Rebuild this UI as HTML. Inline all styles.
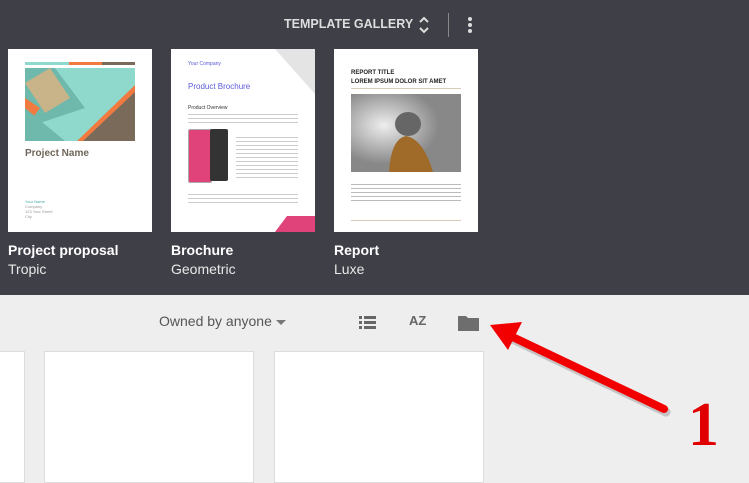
<!DOCTYPE html>
<html><head><style>
body{margin:0;width:749px;height:473px;overflow:hidden;position:relative;font-family:"Liberation Sans",Arial,sans-serif;background:#eeeeee}
.top{position:absolute;left:0;top:0;width:749px;height:295px;background:#3f3f47}
.card{position:absolute;top:49px;width:144px;height:183px;background:#fff;overflow:hidden}
.t{position:absolute;color:#fff;font-size:14px;font-weight:bold}
.s{position:absolute;color:#e8e8e8;font-size:14px}
.w{position:absolute;background:#fff;border:1px solid #ddd;top:351px;height:130px}
</style></head><body>
<div class="top"></div>
<div style="position:absolute;left:284px;top:17px;color:#ddd;font-size:12.5px;font-weight:bold">TEMPLATE GALLERY</div>
<svg style="position:absolute;left:417px;top:14px" width="14" height="22"><path d="M3 8l4-4 4 4M3 14l4 4 4-4" stroke="#ddd" stroke-width="2" fill="none"/></svg>
<div style="position:absolute;left:448px;top:13px;width:1px;height:24px;background:#888"></div>
<div style="position:absolute;left:468px;top:17px;width:4px">
<div style="width:4px;height:4px;border-radius:2px;background:#ddd;margin-bottom:2px"></div><div style="width:4px;height:4px;border-radius:2px;background:#ddd;margin-bottom:2px"></div><div style="width:4px;height:4px;border-radius:2px;background:#ddd"></div></div>

<div class="card" style="left:8px">
 <div style="position:absolute;left:17px;top:13px;width:110px;height:3px;background:linear-gradient(90deg,#8fd9cc 40%,#f07a40 40%,#f07a40 70%,#7a6a5a 70%)"></div>
 <svg style="position:absolute;left:17px;top:19px" width="110" height="73"><rect width="110" height="73" fill="#8fd9cc"/><polygon points="0,0 30,0 60,40 0,60" fill="#6fb8ac"/><polygon points="0,15 25,0 45,30 20,45" fill="#c9b48a"/><polygon points="0,30 15,40 0,60" fill="#f07a40"/><polygon points="110,20 55,73 110,73" fill="#7a6a5a"/><polygon points="110,17 52,73 58,73 110,24" fill="#f07a40"/><polygon points="0,40 40,73 0,73" fill="#6fb8ac"/></svg>
 <div style="position:absolute;left:17px;top:99px;font-size:10px;font-weight:bold;color:#6e6558">Project Name</div>
 <div style="position:absolute;left:17px;top:150px;font-size:4px;color:#4aa;line-height:5px">Your Name<br><span style="color:#999">Company<br>123 Your Street<br>City</span></div>
</div>
<div class="card" style="left:171px">
 <div style="position:absolute;left:17px;top:12px;font-size:5px;color:#5a5ad8">Your Company</div>
 <div style="position:absolute;left:17px;top:33px;font-size:8px;color:#5a5ad8">Product Brochure</div>
 <div style="position:absolute;left:17px;top:56px;font-size:5px;color:#333">Product Overview</div>
 <div style="position:absolute;left:17px;top:65px;width:110px;height:12px;background:repeating-linear-gradient(#ccc 0 1px,transparent 1px 4px)"></div>
 <div style="position:absolute;left:17px;top:80px;width:22px;height:52px;background:#e0427a;border:1px solid #aaa;border-radius:2px"></div>
 <div style="position:absolute;left:39px;top:80px;width:18px;height:52px;background:#333;border-radius:2px"></div>
 <div style="position:absolute;left:65px;top:88px;width:62px;height:44px;background:repeating-linear-gradient(#ccc 0 1px,transparent 1px 4px)"></div>
 <div style="position:absolute;left:17px;top:145px;width:110px;height:12px;background:repeating-linear-gradient(#ccc 0 1px,transparent 1px 4px)"></div>
 <div style="position:absolute;right:0;bottom:0;width:40px;height:16px;background:#e0427a;clip-path:polygon(30% 0,100% 0,100% 100%,0 100%)"></div>
 <div style="position:absolute;right:0;top:0;width:40px;height:45px;background:#e4e4e4;clip-path:polygon(0 0,100% 0,100% 100%)"></div>
</div>
<div class="card" style="left:334px">
 <div style="position:absolute;left:17px;top:20px;font-size:6px;font-weight:bold;color:#222;line-height:9px">REPORT TITLE<br>LOREM IPSUM DOLOR SIT AMET</div>
 <div style="position:absolute;left:17px;top:39px;width:110px;height:1px;background:#d8cbb8"></div>
 <svg style="position:absolute;left:17px;top:45px" width="110" height="78"><defs><radialGradient id="g" cx="0.3" cy="0.4"><stop offset="0" stop-color="#eee"/><stop offset="1" stop-color="#888"/></radialGradient></defs><rect width="110" height="78" fill="url(#g)"/><path d="M38 78 Q40 45 55 42 Q72 45 82 78Z" fill="#a06a28"/><ellipse cx="57" cy="30" rx="13" ry="12" fill="#666"/></svg>
 <div style="position:absolute;left:17px;top:135px;width:110px;height:20px;background:repeating-linear-gradient(#bbb 0 1px,transparent 1px 4px)"></div>
 <div style="position:absolute;left:17px;top:171px;width:110px;height:1px;background:#d8cbb8"></div>
</div>
<div class="t" style="left:8px;top:242px">Project proposal</div><div class="s" style="left:8px;top:261px">Tropic</div>
<div class="t" style="left:171px;top:242px">Brochure</div><div class="s" style="left:171px;top:261px">Geometric</div>
<div class="t" style="left:334px;top:242px">Report</div><div class="s" style="left:334px;top:261px">Luxe</div>

<div style="position:absolute;left:159px;top:313px;font-size:14px;color:#555">Owned by anyone</div>
<div style="position:absolute;left:276px;top:320px;border:5px solid transparent;border-top:5px solid #777;border-bottom:0"></div>
<svg style="position:absolute;left:358px;top:314px" width="20" height="16"><g fill="#666"><rect x="1" y="2" width="3" height="3"/><rect x="6" y="2" width="12" height="3"/><rect x="1" y="7" width="3" height="3"/><rect x="6" y="7" width="12" height="3"/><rect x="1" y="12" width="3" height="3"/><rect x="6" y="12" width="12" height="3"/></g></svg>
<div style="position:absolute;left:409px;top:313px;font-size:13px;color:#666;font-weight:bold">AZ</div>
<svg style="position:absolute;left:457px;top:314px" width="24" height="18"><path d="M1 2h8l2 2h11v13H1z" fill="#6e6e6e"/></svg>
<div class="w" style="left:-1px;width:24px"></div>
<div class="w" style="left:44px;width:208px"></div>
<div class="w" style="left:274px;width:208px"></div>
<svg style="position:absolute;left:480px;top:310px" width="200" height="110"><path d="M22 22 L184 99" stroke="#888" stroke-width="9" stroke-linecap="round" opacity="0.4" transform="translate(2,3)"/><path d="M22 22 L184 99" stroke="#f20000" stroke-width="8" stroke-linecap="round"/><polygon points="10,15 42,12 28,40" fill="#f20000"/></svg>
<div style="position:absolute;left:688px;top:390px;font-family:'Liberation Serif',serif;font-weight:bold;font-size:62px;color:#e00000;line-height:70px">1</div>
</body></html>
